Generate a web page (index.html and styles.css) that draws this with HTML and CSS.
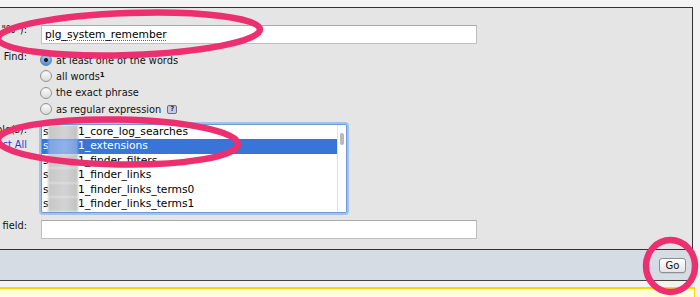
FILE: index.html
```html
<!DOCTYPE html>
<html lang="en">
<head>
<meta charset="utf-8">
<title>Search in database</title>
<link rel="stylesheet" href="styles.css">
</head>
<body>
<div class="page">
  <form class="search">
    <div class="fieldset">
      <div class="grid">
        <div class="lbl lbl-words"><span>Words or values to search for (wildcard: "%"):</span></div>
        <div class="textbox"><span class="misspelt">plg_system_remember</span></div>

        <div class="lbl lbl-find"><span>Find:</span></div>
        <div class="radios">
          <label class="opt"><input type="radio" name="type" checked><span>at least one of the words</span></label>
          <label class="opt"><input type="radio" name="type"><span>all words<sup>1</sup></span></label>
          <label class="opt"><input type="radio" name="type"><span>the exact phrase</span></label>
          <label class="opt"><input type="radio" name="type"><span>as regular expression</span><span class="help">?</span></label>
        </div>

        <div class="lbl-stack">
          <div class="lbl"><span>Inside table(s):</span></div>
          <div class="lbl lbl-link"><span><a href="#">Select All</a> / <a href="#">Unselect All</a></span></div>
        </div>
        <div class="listbox">
          <div class="rows">
            <div class="row"><span class="s">s</span><span class="blur"></span>1_core_log_searches</div>
            <div class="row selected"><span class="s">s</span><span class="blur"></span>1_extensions</div>
            <div class="row"><span class="s">s</span><span class="blur"></span>1_finder_filters</div>
            <div class="row"><span class="s">s</span><span class="blur"></span>1_finder_links</div>
            <div class="row"><span class="s">s</span><span class="blur"></span>1_finder_links_terms0</div>
            <div class="row"><span class="s">s</span><span class="blur"></span>1_finder_links_terms1</div>
          </div>
          <div class="scrollbar"><div class="thumb"></div></div>
        </div>

        <div class="lbl lbl-field"><span>Inside field:</span></div>
        <div class="textbox"></div>
      </div>
    </div>
    <div class="footer"><button type="button" class="go">Go</button></div>
  </form>
  <div class="notice"></div>
</div>
<svg class="marks" width="700" height="297" viewBox="0 0 700 297" aria-hidden="true">
  <g fill="none" stroke="#ec2f6e" stroke-width="6.5">
    <ellipse cx="129" cy="34" rx="131" ry="21" transform="rotate(-2 129 34)"/>
    <ellipse cx="118" cy="142" rx="120" ry="22.5" transform="rotate(1 118 142)"/>
    <ellipse cx="670.5" cy="266" rx="24.5" ry="26"/>
  </g>
</svg>
</body>
</html>
```
FILE: styles.css
```css
* { box-sizing: border-box; }
html, body { margin: 0; padding: 0; }
body {
  width: 700px;
  height: 297px;
  overflow: hidden;
  position: relative;
  background: #f3f3f3;
  font-family: "DejaVu Sans", "Noto Sans", sans-serif;
  color: #111;
}
.page { padding-top: 7px; }

.fieldset {
  width: 693px;
  background: #e5e5e5;
  border-top: 1px solid #333;
  border-right: 1px solid #333;
  border-bottom: 1px solid #333;
  padding: 17px 0 10px 0;
}
.grid {
  display: grid;
  grid-template-columns: 27px 436px;
  column-gap: 14px;
  align-items: start;
}

.lbl {
  display: flex;
  justify-content: flex-end;
  overflow: hidden;
  white-space: nowrap;
  font-size: 9.8px;
  line-height: 12px;
  color: #111;
}
.lbl-words { margin-top: -1px; }
.lbl-find { margin-top: 6.5px; }
.lbl-stack { margin-top: 6.8px; }
.lbl-stack .lbl { line-height: 11px; }
.lbl-stack .lbl-link { margin-top: 4px; }
.lbl a { color: #1f3fd1; text-decoration: none; }
.lbl-field { margin-top: 7px; }

.textbox {
  height: 19px;
  background: #fff;
  border: 1px solid #bfbfbf;
  border-top-color: #a9a9a9;
  padding: 0 3px;
  font-size: 10.7px;
  line-height: 17px;
  color: #000;
}
.grid > .textbox:last-child { margin-top: 7px; }
.misspelt {
  text-decoration: underline dotted #e03535;
  text-underline-offset: 2px;
}

.radios { margin-top: 8px; display: flex; flex-direction: column; }
.opt {
  display: flex;
  align-items: center;
  height: 16.3px;
  font-size: 9.8px;
  white-space: nowrap;
  color: #111;
}
.opt input {
  appearance: none;
  -webkit-appearance: none;
  flex: none;
  width: 12px;
  height: 12px;
  margin: 0 4px 0 -1px;
  border-radius: 50%;
  border: 1px solid #949494;
  background: linear-gradient(#fdfdfd, #dadada);
  box-shadow: inset 0 1px 1px rgba(0,0,0,.08);
}
.opt input:checked {
  border-color: #5b80b2;
  background:
    radial-gradient(circle, #1c1c1c 0 1.7px, transparent 2.3px),
    linear-gradient(#b3d0f3, #4d8cd9);
}
.opt sup {
  font-size: 7px;
  font-weight: bold;
  line-height: 0;
  vertical-align: 3px;
}
.help {
  display: inline-block;
  width: 10px;
  height: 9px;
  margin-left: 6px;
  border: 1px solid #6a6a80;
  border-radius: 2px;
  background: #c9c9e6;
  font-size: 7px;
  font-weight: bold;
  line-height: 7px;
  text-align: center;
  color: #333;
}

.listbox {
  margin-top: 6.8px;
  width: 306px;
  height: 89px;
  display: flex;
  background: #fff;
  border: 1px solid #6f98d6;
  border-radius: 2px;
  box-shadow: 0 0 0 2px #a5c1eb;
  overflow: hidden;
}
.rows { flex: 1; overflow: hidden; }
.row {
  height: 14.5px;
  line-height: 14.5px;
  padding-left: 1px;
  font-size: 10.7px;
  white-space: nowrap;
  color: #000;
}
.row.selected { background: #3875d7; color: #fff; }
.row .blur {
  display: inline-block;
  vertical-align: top;
  width: 30.5px;
  height: 14.5px;
  margin-left: -1px;
  background: linear-gradient(90deg, #c6c6c6, #d3d3d3 55%, #c2c2c2);
  filter: blur(1.2px);
}
.row.selected .blur { background: linear-gradient(90deg, #7ea4e0, #8fb2ea 55%, #7aa0de); }
.scrollbar {
  flex: none;
  width: 9px;
  border-left: 1px solid #e3e3e3;
  background: #fff;
}
.thumb {
  width: 4px;
  height: 12px;
  margin: 8px 0 0 2px;
  border-radius: 2px;
  background: #b9b9b9;
}

.footer {
  width: 693px;
  height: 31px;
  background: #d5dce3;
  border-right: 1px solid #333;
  border-bottom: 1px solid #444;
  display: flex;
  justify-content: flex-end;
  align-items: flex-start;
  padding: 8px 6px 0 0;
}
.go {
  width: 27px;
  height: 15px;
  padding: 0;
  font-family: "DejaVu Sans", sans-serif;
  font-size: 10px;
  line-height: 13px;
  color: #111;
  border: 1px solid #8e8e8e;
  border-radius: 3px;
  background: linear-gradient(#ffffff, #e4e4e4);
  box-shadow: 0 1px 0 rgba(0,0,0,.08);
}

.notice {
  margin-top: 6px;
  width: 695px;
  height: 10px;
  background: #ffffdd;
  border-top: 2px solid #ffd700;
  border-right: 1px solid #ffd700;
}
.marks {
  position: absolute;
  left: 0;
  top: 0;
  pointer-events: none;
}
```
